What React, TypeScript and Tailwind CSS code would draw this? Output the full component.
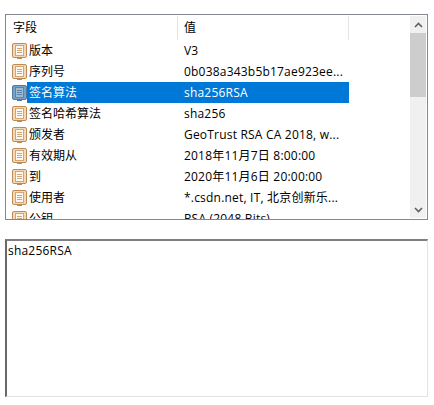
import React from "react";

const rows = [
  { name: "版本", value: "V3" },
  { name: "序列号", value: "0b038a343b5b17ae923ee..." },
  { name: "签名算法", value: "sha256RSA", selected: true },
  { name: "签名哈希算法", value: "sha256" },
  { name: "颁发者", value: "GeoTrust RSA CA 2018, w..." },
  { name: "有效期从", value: "2018年11月7日 8:00:00" },
  { name: "到", value: "2020年11月6日 20:00:00" },
  { name: "使用者", value: "*.csdn.net, IT, 北京创新乐..." },
  { name: "公钥", value: "RSA (2048 Bits)" },
];

function FieldIcon({ selected }: { selected?: boolean }) {
  const edge = selected ? "#4d7ba6" : "#c08a55";
  const fill = selected ? "#7ba1c2" : "#f3d9b8";
  const page = selected ? "#9dbad3" : "#fdf8f0";
  const line = selected ? "#5a86ad" : "#cfa67a";
  return (
    <svg width="15" height="17" viewBox="0 0 15 17" className="shrink-0">
      <rect x="0.5" y="0.5" width="14" height="14" rx="1.5" fill={fill} stroke={edge} />
      <rect x="3.5" y="2.5" width="8" height="10" fill={page} stroke={line} />
      <path d="M5 5.5h5M5 7.5h5M5 9.5h5" stroke={line} />
      <path d="M5 15.5h5" stroke={edge} />
    </svg>
  );
}

function Row({ name, value, selected }: { name: string; value: string; selected?: boolean }) {
  return (
    <div className="flex h-[21px] items-center">
      <div className="flex w-[21px] shrink-0 pl-[6px] pt-[2px]">
        <FieldIcon selected={selected} />
      </div>
      <div className={`flex h-full w-[322px] items-center ${selected ? "bg-[#0078d7] text-white" : ""}`}>
        <span className="w-[157px] shrink-0 pl-[2px]">{name}</span>
        <span className="whitespace-nowrap tracking-[0.2px]">{value}</span>
      </div>
    </div>
  );
}

export default function App() {
  return (
    <div
      className="h-[405px] w-[434px] overflow-hidden bg-white pl-[5px] pr-[6px] pt-[14px] text-[12px] leading-[16px] text-black [font-family:'Open_Sans','Noto_Sans_CJK_SC',sans-serif]"
    >
      <div className="flex h-[206px] border border-[#828790]">
        <div className="min-w-0 flex-1 overflow-hidden">
          <div className="flex h-[25px] items-center">
            <div className="flex h-[24px] w-[172px] shrink-0 items-center border-r border-[#e5e5e5] pl-[7px]">字段</div>
            <div className="flex h-[24px] w-[171px] shrink-0 items-center border-r border-[#e5e5e5] pl-[6px]">值</div>
          </div>
          {rows.map((row) => (
            <Row key={row.name} {...row} />
          ))}
        </div>
        <div className="my-[1px] mr-[1px] flex w-[16px] shrink-0 flex-col bg-[#f0f0f0]">
          <div className="flex h-[17px] items-center justify-center">
            <svg width="9" height="6" viewBox="0 0 9 6">
              <path d="M1 5l3.5-3.5L8 5" fill="none" stroke="#606060" strokeWidth="1.6" />
            </svg>
          </div>
          <div className="h-[64px] bg-[#cdcdcd]" />
          <div className="flex-1" />
          <div className="flex h-[17px] items-center justify-center">
            <svg width="9" height="6" viewBox="0 0 9 6">
              <path d="M1 1l3.5 3.5L8 1" fill="none" stroke="#606060" strokeWidth="1.6" />
            </svg>
          </div>
        </div>
      </div>
      <div className="mt-[19px] h-[158px] border-b border-l-2 border-r border-t-2 border-b-[#e3e3e3] border-l-[#696969] border-r-[#e3e3e3] border-t-[#7f7f7f] pl-[1px] pt-[2px] tracking-[0.2px]">
        sha256RSA
      </div>
    </div>
  );
}
